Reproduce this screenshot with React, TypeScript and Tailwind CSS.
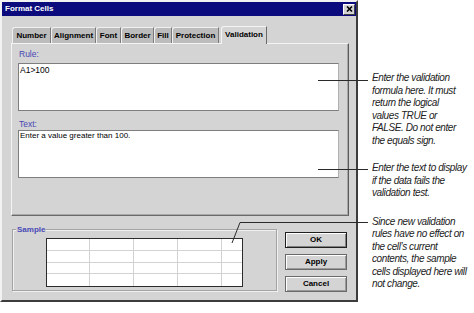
import React from "react";

const tabs: { label: string; w: number }[] = [
  { label: "Number", w: 39 },
  { label: "Alignment", w: 45 },
  { label: "Font", w: 25 },
  { label: "Border", w: 33 },
  { label: "Fill", w: 18 },
  { label: "Protection", w: 47 },
];

function Btn({ label, def }: { label: string; def?: boolean }) {
  return (
    <div
      className={
        "w-[62px] h-[16px] flex items-center justify-center text-[8px] font-bold leading-none text-black bg-[#d4d4d4] border " +
        (def ? "border-[#202020] shadow-[inset_1px_1px_0_#ffffff,inset_-1px_-1px_0_#808080]" : "border-[#6a6a6a] shadow-[inset_1px_1px_0_#ffffff,inset_-1px_-1px_0_#9a9a9a]")
      }
    >
      {label}
    </div>
  );
}

export default function App() {
  const rows = [0, 1, 2, 3];
  const cols = [0, 1, 2, 3, 4];
  return (
    <div
      className="relative w-[474px] h-[313px] bg-white overflow-hidden flex"
      style={{ fontFamily: "'Liberation Sans', Arial, sans-serif" }}
    >
      {/* Dialog */}
      <div className="w-[358px] h-[302px] shrink-0 bg-[#d4d4d4] border-2 border-t-[#f2f2f2] border-l-[#f2f2f2] border-r-[#3c3c3c] border-b-[#3c3c3c] flex flex-col">
        {/* Title bar */}
        <div className="h-[14px] bg-[#0b0b7d] flex items-center justify-between pl-[3px] pr-[1px]">
          <span className="text-white text-[8px] font-bold leading-none">Format Cells</span>
          <div className="w-[12px] h-[11px] bg-[#d4d4d4] border border-t-white border-l-white border-r-[#404040] border-b-[#404040] flex items-center justify-center">
            <svg width="7" height="6" viewBox="0 0 7 6">
              <path d="M1 0.5 L6 5.5 M6 0.5 L1 5.5" stroke="#000" strokeWidth="1.6" />
            </svg>
          </div>
        </div>

        {/* Tabs */}
        <div className="ml-[10px] mt-[9px] h-[18px] flex items-end relative z-10">
          {tabs.map((t) => (
            <div
              key={t.label}
              style={{ width: t.w }}
              className="h-[16px] bg-[#bcbcbc] border border-b-0 border-t-[#f0f0f0] border-l-[#f0f0f0] border-r-[#7a7a7a] rounded-tl-[3px] flex items-center justify-center text-[8px] font-bold leading-none text-black"
            >
              {t.label}
            </div>
          ))}
          <div className="w-[46px] h-[18px] mb-[-1px] ml-[2px] bg-[#d4d4d4] border border-b-0 border-t-[#f4f4f4] border-l-[#f4f4f4] border-r-[#6a6a6a] rounded-tl-[3px] flex items-center justify-center pb-[2px] text-[8px] font-bold leading-none text-black">
            Validation
          </div>
        </div>

        {/* Panel */}
        <div className="ml-[9px] w-[338px] h-[173px] border border-t-[#f4f4f4] border-l-[#f4f4f4] border-r-[#5a5a5a] border-b-[#6a6a6a] shadow-[inset_-1px_-1px_0_#a8a8a8] pl-[6px] pt-[4px] flex flex-col">
          <div className="ml-[1px] h-[12px] text-[8.5px] leading-[12px] text-[#4646b4]">Rule:</div>
          <div className="mt-[3px] w-[321px] h-[48px] bg-white border border-[#7e7e7e] border-r-[#b0b0b0] pl-[1px] text-[8.5px] leading-[12px] text-black">
            A1&gt;100
          </div>
          <div className="ml-[1px] mt-[7px] h-[12px] text-[8.5px] leading-[12px] text-[#4646b4]">Text:</div>
          <div className="w-[321px] h-[48px] bg-white border border-[#7e7e7e] border-r-[#b0b0b0] pl-[1px] text-[8px] leading-[10px] text-black">
            Enter a value greater than 100.
          </div>
        </div>

        {/* Bottom */}
        <div className="mt-[13px] ml-[10px] flex">
          <div className="relative w-[265px] h-[62px] border border-[#a4a4a4] shadow-[inset_1px_1px_0_#f0f0f0,1px_1px_0_#f0f0f0] pl-[33px] pt-[8px]">
            <div className="absolute left-[3px] top-[-6px] px-[1px] bg-[#d4d4d4] text-[8px] font-bold leading-[11px] text-[#4a4ab6]">
              Sample
            </div>
            <div className="w-[197px] h-[49px] bg-white border border-[#2c2c2c] grid grid-cols-[43px_44px_44px_44px_1fr] grid-rows-4">
              {rows.map((r) =>
                cols.map((c) => (
                  <div
                    key={r + "-" + c}
                    className={
                      (c < 4 ? "border-r " : "") + (r < 3 ? "border-b " : "") + "border-[#d2d2d2]"
                    }
                  />
                ))
              )}
            </div>
          </div>
          <div className="ml-[8px] mt-[3px] flex flex-col gap-[6px]">
            <Btn label="OK" def />
            <Btn label="Apply" />
            <Btn label="Cancel" />
          </div>
        </div>
      </div>

      {/* Callouts */}
      <div className="pl-[14px] text-[10px] leading-[12.5px] italic tracking-[-0.4px] text-[#222] whitespace-nowrap">
        <div className="mt-[72px]">
          Enter the validation
          <br />
          formula here. It must
          <br />
          return the logical
          <br />
          values TRUE or
          <br />
          FALSE. Do not enter
          <br />
          the equals sign.
        </div>
        <div className="mt-[15px]">
          Enter the text to display
          <br />
          if the data fails the
          <br />
          validation test.
        </div>
        <div className="mt-[16px]">
          Since new validation
          <br />
          rules have no effect on
          <br />
          the cell’s current
          <br />
          contents, the sample
          <br />
          cells displayed here will
          <br />
          not change.
        </div>
      </div>

      <svg className="absolute inset-0 pointer-events-none" width="474" height="313">
        <path d="M318 80.5 H368" stroke="#2a2a2a" strokeWidth="1" fill="none" />
        <path d="M318 169.5 H368" stroke="#2a2a2a" strokeWidth="1" fill="none" />
        <path d="M232 243 L240 222.5 H368" stroke="#2a2a2a" strokeWidth="1" fill="none" />
      </svg>
    </div>
  );
}
